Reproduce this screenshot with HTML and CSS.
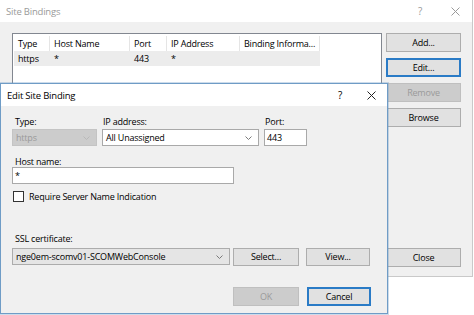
FILE: index.html
```html
<!DOCTYPE html>
<html>
<head>
<meta charset="utf-8">
<link rel="stylesheet" href="styles.css">
</head>
<body>
<div class="site-win">
  <div class="titlebar inactive">
    <span class="title">Site Bindings</span>
    <span class="tb-help">?</span>
    <span class="tb-close"><svg width="9" height="9" viewBox="0 0 9 9"><path d="M0.5 0.5L8.5 8.5M8.5 0.5L0.5 8.5" stroke="#9a9a9a" stroke-width="1" fill="none"/></svg></span>
  </div>
  <div class="site-body">
    <div class="listview">
      <div class="lv-header">
        <span class="col c1">Type</span>
        <span class="col c2">Host Name</span>
        <span class="col c3">Port</span>
        <span class="col c4">IP Address</span>
        <span class="col c5">Binding Informa...</span>
      </div>
      <div class="lv-row selected">
        <span class="col c1">https</span>
        <span class="col c2">*</span>
        <span class="col c3">443</span>
        <span class="col c4">*</span>
        <span class="col c5"></span>
      </div>
    </div>
    <div class="side-buttons">
      <button class="btn">Add...</button>
      <button class="btn focus">Edit...</button>
      <button class="btn disabled">Remove</button>
      <button class="btn">Browse</button>
      <button class="btn close-btn">Close</button>
    </div>
  </div>
</div>

<div class="dialog">
  <div class="titlebar">
    <span class="title">Edit Site Binding</span>
    <span class="tb-help">?</span>
    <span class="tb-close"><svg width="9" height="9" viewBox="0 0 9 9"><path d="M0.5 0.5L8.5 8.5M8.5 0.5L0.5 8.5" stroke="#222" stroke-width="1" fill="none"/></svg></span>
  </div>
  <div class="dlg-body">
    <div class="row-fields">
      <div class="field f-type">
        <label class="lbl">Type:</label>
        <div class="combo disabled"><span>https</span><svg class="chev" width="7" height="4" viewBox="0 0 7 4"><path d="M0.5 0.5L3.5 3.5L6.5 0.5" stroke="#b8b8b8" fill="none"/></svg></div>
      </div>
      <div class="field f-ip">
        <label class="lbl">IP address:</label>
        <div class="combo editable"><span>All Unassigned</span><svg class="chev" width="7" height="4" viewBox="0 0 7 4"><path d="M0.5 0.5L3.5 3.5L6.5 0.5" stroke="#7a7a7a" fill="none"/></svg></div>
      </div>
      <div class="field f-port">
        <label class="lbl">Port:</label>
        <div class="textbox"><span>443</span></div>
      </div>
    </div>
    <div class="field f-host">
      <label class="lbl">Host name:</label>
      <div class="textbox"><span>*</span></div>
    </div>
    <div class="check-row">
      <span class="checkbox"></span>
      <span class="check-lbl">Require Server Name Indication</span>
    </div>
    <div class="field f-ssl">
      <label class="lbl">SSL certificate:</label>
      <div class="ssl-row">
        <div class="combo list"><span>nge0em-scomv01-SCOMWebConsole</span><svg class="chev" width="7" height="4" viewBox="0 0 7 4"><path d="M0.5 0.5L3.5 3.5L6.5 0.5" stroke="#7a7a7a" fill="none"/></svg></div>
        <button class="btn b-select">Select...</button>
        <button class="btn b-view">View...</button>
      </div>
    </div>
    <div class="dlg-footer">
      <button class="btn disabled b-ok">OK</button>
      <button class="btn focus b-cancel">Cancel</button>
    </div>
  </div>
</div>
</body>
</html>
```
FILE: styles.css
```css
* { box-sizing: border-box; }
html, body { margin: 0; padding: 0; }
body {
  width: 474px;
  height: 315px;
  background: #ffffff;
  font-family: "Open Sans", "Noto Sans", sans-serif;
  font-size: 9px;
  letter-spacing: -0.2px;
  color: #000;
  position: relative;
  overflow: hidden;
}
button { font: inherit; letter-spacing: inherit; }

.site-win {
  width: 473px;
  height: 277px;
  background: #f0f0f0;
  border-right: 1px solid #c9c9c9;
  border-bottom: 1px solid #c9c9c9;
  display: flex;
  flex-direction: column;
}
.titlebar {
  height: 22px;
  background: #ffffff;
  display: flex;
  align-items: center;
  padding-left: 6px;
  flex: none;
}
.titlebar .title { flex: 1; font-size: 9.5px; }
.titlebar.inactive .title { color: #9a9a9a; }
.titlebar.inactive .tb-help { color: #9a9a9a; }
.tb-help { width: 33px; text-align: left; font-size: 10px; }
.tb-close { width: 21px; display: flex; align-items: center; }

.site-body {
  flex: 1;
  display: flex;
  padding: 11px 11px 9px 12px;
}
.listview {
  width: 370px;
  background: #ffffff;
  border: 1px solid #828790;
  height: 230px;
  padding-top: 2px;
  padding-left: 1px;
}
.lv-header, .lv-row { display: flex; height: 15px; align-items: center; }
.lv-header .col { border-right: 1px solid #e5e5e5; height: 15px; line-height: 15px; }
.lv-row.selected { background: #ececec; width: 306px; }
.col { padding-left: 4px; white-space: nowrap; overflow: hidden; }
.c1 { width: 36px; }
.c2 { width: 80px; }
.c3 { width: 37px; }
.c4 { width: 73px; }
.c5 { width: 80px; }

.side-buttons {
  margin-left: auto;
  width: 75px;
  display: flex;
  flex-direction: column;
  gap: 6px;
}
.btn {
  height: 19px;
  background: #e1e1e1;
  border: 1px solid #adadad;
  color: #000;
  padding: 0;
  text-align: center;
  line-height: 16px;
}
.btn.focus { border: 2px solid #2a7bc6; line-height: 14px; }
.btn.disabled { background: #cccccc; border-color: #bfbfbf; color: #9a9a9a; }
.close-btn { margin-top: auto; }

.dialog {
  position: absolute;
  left: 0;
  top: 83px;
  width: 388px;
  height: 231px;
  background: #f0f0f0;
  border: 1px solid #6f9cc6;
  box-shadow: 0 0 0 1px rgba(111,156,198,0.35);
  display: flex;
  flex-direction: column;
}
.dialog .titlebar { padding-left: 6px; }
.dialog .tb-help { width: 29px; }
.dialog .tb-close { width: 20px; }
.dlg-body {
  flex: 1;
  padding: 10px 0 0 11px;
  display: flex;
  flex-direction: column;
}
.row-fields { display: flex; gap: 5px; }
.field { display: flex; flex-direction: column; }
.lbl { height: 12px; line-height: 12px; padding-left: 3px; margin-bottom: 1px; }
.f-type { width: 85px; }
.f-ip { width: 157px; }
.f-port { width: 43px; }
.f-ip .lbl, .f-port .lbl { padding-left: 1px; }

.combo, .textbox {
  height: 17px;
  border: 1px solid #a9a9a9;
  display: flex;
  align-items: center;
  padding-left: 3px;
  padding-right: 6px;
  white-space: nowrap;
  overflow: hidden;
}
.combo span { flex: 1; }
.combo.disabled { background: #cccccc; border-color: #c4c4c4; color: #9a9a9a; }
.combo.editable { background: #ffffff; }
.combo.list { background: #e5e5e5; border-color: #acacac; width: 218px; }
.textbox { background: #ffffff; padding-left: 2px; }
.chev { flex: none; }

.f-host { margin-top: 10px; width: 222px; }
.f-host .lbl { margin-bottom: 0; height: 11px; line-height: 11px; }
.check-row {
  margin-top: 6px;
  display: flex;
  align-items: center;
  height: 13px;
}
.checkbox {
  width: 11px;
  height: 11px;
  border: 1px solid #333;
  background: #fff;
  margin-left: 1px;
  margin-right: 5px;
}
.f-ssl { margin-top: 30px; }
.f-ssl .lbl { margin-bottom: 3px; }
.ssl-row { display: flex; align-items: flex-start; }
.b-select { width: 66px; margin-left: 3px; height: 18px; }
.b-view { width: 64px; margin-left: 7px; height: 18px; }
.dlg-footer {
  margin-top: 21px;
  display: flex;
  padding-left: 221px;
  gap: 8px;
}
.b-ok { width: 66px; }
.b-cancel { width: 64px; }
```
